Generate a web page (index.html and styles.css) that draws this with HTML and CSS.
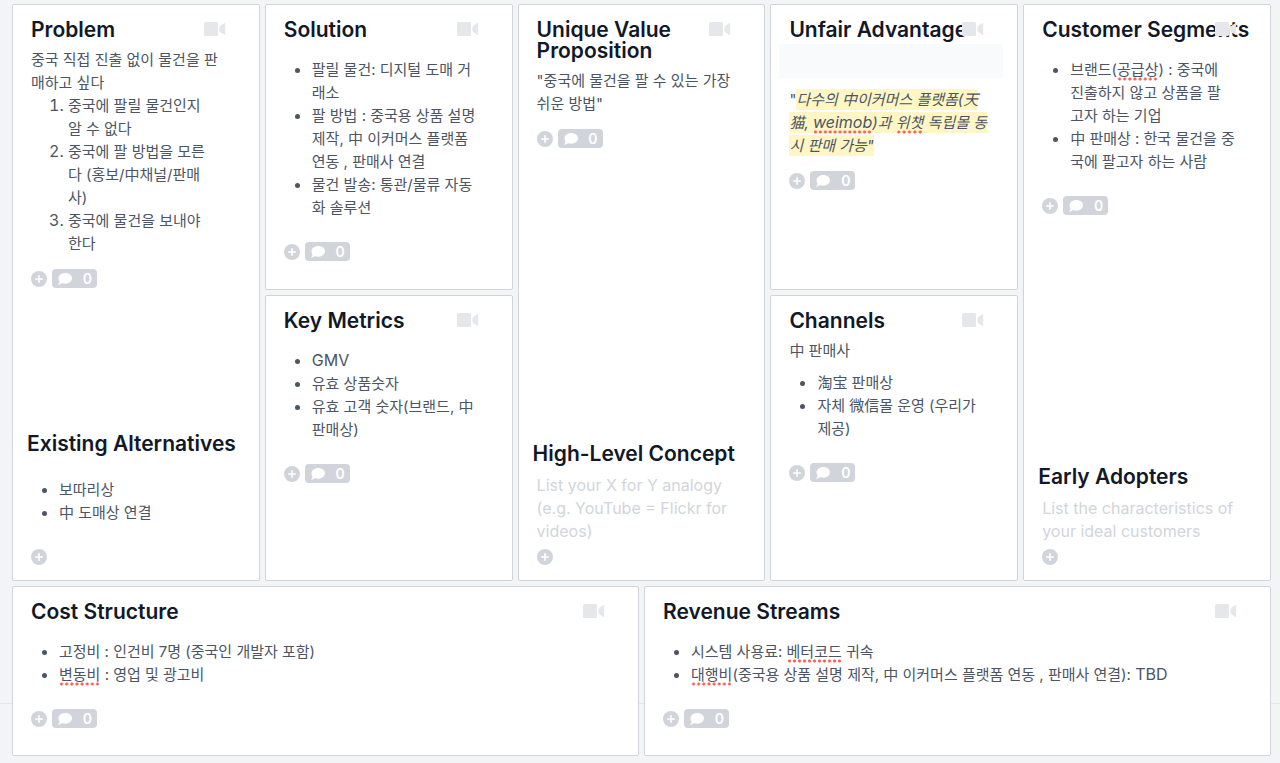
FILE: index.html
```html
<!DOCTYPE html>
<html lang="ko">
<head>
    <meta charset="UTF-8">
    <meta name="viewport" content="width=device-width, initial-scale=1.0">
    <title>Lean Canvas</title>
    <link rel="stylesheet" href="styles.css">
</head>
<body>
    <!-- shared icons -->
    <svg class="sprite" aria-hidden="true">
        <symbol id="icon-video" viewBox="0 0 22 14">
            <rect x="0" y="0" width="14" height="14" rx="1.5"/>
            <path d="M20.2 1.2 Q21.2 .6 21.2 1.8 V12.2 Q21.2 13.4 20.2 12.8 L16.4 10.3 Q15.2 9.2 15.2 7 Q15.2 4.8 16.4 3.7 Z"/>
        </symbol>
        <symbol id="icon-plus" viewBox="0 0 16 16">
            <circle cx="8" cy="8" r="8" fill="#d1d5db"/>
            <path d="M8 4.7 V11.3 M4.7 8 H11.3" stroke="#fff" stroke-width="1.6" stroke-linecap="round"/>
        </symbol>
        <symbol id="icon-comment" viewBox="0 0 14 12">
            <path d="M7.3 0 C11 0 14 2.3 14 5.3 C14 8.3 11 10.7 7.3 10.7 C6 10.7 4.9 10.5 3.9 10 C2.9 10.9 1.6 11.6 .2 11.7 C0 11.7 0 11.5 .1 11.4 C1 10.6 1.4 9.6 1.5 8.4 C.9 7.5 .5 6.4 .5 5.3 C.5 2.3 3.6 0 7.3 0 Z"/>
        </symbol>
    </svg>

    <main class="canvas">
        <section class="card tall">
            <h2>Problem</h2>
            <button class="video" aria-label="Problem video"><svg><use href="#icon-video"/></svg></button>
            <div class="editor">
                <p>중국 직접 진출 없이 물건을 판<br>매하고 싶다</p>
                <ol>
                    <li>중국에 팔릴 물건인지<br>알 수 없다</li>
                    <li>중국에 팔 방법을 모른<br>다 (홍보/中채널/판매<br>사)</li>
                    <li>중국에 물건을 보내야<br>한다</li>
                </ol>
            </div>
            <div class="actions">
                <button class="add" aria-label="Add"><svg><use href="#icon-plus"/></svg></button>
                <button class="comments" aria-label="Comments: 0"><svg><use href="#icon-comment"/></svg><span>0</span></button>
            </div>
            <div class="sub">
                <h2>Existing Alternatives</h2>
                <div class="editor">
                    <ul>
                        <li>보따리상</li>
                        <li>中 도매상 연결</li>
                    </ul>
                </div>
                <button class="add" aria-label="Add"><svg><use href="#icon-plus"/></svg></button>
            </div>
        </section>

        <section class="card">
            <h2>Solution</h2>
            <button class="video" aria-label="Solution video"><svg><use href="#icon-video"/></svg></button>
            <div class="editor">
                <ul>
                    <li>팔릴 물건: 디지털 도매 거<br>래소</li>
                    <li>팔 방법 : 중국용 상품 설명<br>제작, 中 이커머스 플랫폼<br>연동 , 판매사 연결</li>
                    <li>물건 발송: 통관/물류 자동<br>화 솔루션</li>
                </ul>
            </div>
            <div class="actions">
                <button class="add" aria-label="Add"><svg><use href="#icon-plus"/></svg></button>
                <button class="comments" aria-label="Comments: 0"><svg><use href="#icon-comment"/></svg><span>0</span></button>
            </div>
        </section>

        <section class="card tall">
            <h2>Unique Value<br>Proposition</h2>
            <button class="video" aria-label="Unique Value Proposition video"><svg><use href="#icon-video"/></svg></button>
            <div class="editor">
                <p>"중국에 물건을 팔 수 있는 가장<br>쉬운 방법"</p>
            </div>
            <div class="actions">
                <button class="add" aria-label="Add"><svg><use href="#icon-plus"/></svg></button>
                <button class="comments" aria-label="Comments: 0"><svg><use href="#icon-comment"/></svg><span>0</span></button>
            </div>
            <div class="sub">
                <h2><label for="concept">High-Level Concept</label></h2>
                <textarea id="concept" rows="3" placeholder="List your X for Y analogy (e.g. YouTube = Flickr for videos)"></textarea>
                <button class="add" aria-label="Add"><svg><use href="#icon-plus"/></svg></button>
            </div>
        </section>

        <section class="card">
            <h2>Unfair Advantage</h2>
            <button class="video" aria-label="Unfair Advantage video"><svg><use href="#icon-video"/></svg></button>
            <div class="toolbar"></div>
            <div class="editor">
                <p>"<mark>다수의 中이커머스 플랫폼(天<br>猫, <span class="latin typo">weimob</span>)과 <span class="typo">위챗</span> 독립몰 동<br>시 판매 가능"</mark></p>
            </div>
            <div class="actions">
                <button class="add" aria-label="Add"><svg><use href="#icon-plus"/></svg></button>
                <button class="comments" aria-label="Comments: 0"><svg><use href="#icon-comment"/></svg><span>0</span></button>
            </div>
        </section>

        <section class="card tall">
            <h2>Customer Segments</h2>
            <button class="video" aria-label="Customer Segments video"><svg><use href="#icon-video"/></svg></button>
            <div class="editor">
                <ul>
                    <li>브랜드(<span class="typo">공급상</span>) : 중국에<br>진출하지 않고 상품을 팔<br>고자 하는 기업</li>
                    <li>中 판매상 : 한국 물건을 중<br>국에 팔고자 하는 사람</li>
                </ul>
            </div>
            <div class="actions">
                <button class="add" aria-label="Add"><svg><use href="#icon-plus"/></svg></button>
                <button class="comments" aria-label="Comments: 0"><svg><use href="#icon-comment"/></svg><span>0</span></button>
            </div>
            <div class="sub">
                <h2><label for="adopters">Early Adopters</label></h2>
                <textarea id="adopters" rows="2" placeholder="List the characteristics of your ideal customers"></textarea>
                <button class="add" aria-label="Add"><svg><use href="#icon-plus"/></svg></button>
            </div>
        </section>

        <section class="card">
            <h2>Key Metrics</h2>
            <button class="video" aria-label="Key Metrics video"><svg><use href="#icon-video"/></svg></button>
            <div class="editor">
                <ul>
                    <li><span class="latin">GMV</span></li>
                    <li>유효 상품숫자</li>
                    <li>유효 고객 숫자(브랜드, 中<br>판매상)</li>
                </ul>
            </div>
            <div class="actions">
                <button class="add" aria-label="Add"><svg><use href="#icon-plus"/></svg></button>
                <button class="comments" aria-label="Comments: 0"><svg><use href="#icon-comment"/></svg><span>0</span></button>
            </div>
        </section>

        <section class="card">
            <h2>Channels</h2>
            <button class="video" aria-label="Channels video"><svg><use href="#icon-video"/></svg></button>
            <div class="editor">
                <p>中 판매사</p>
                <ul>
                    <li>淘宝 판매상</li>
                    <li>자체 微信몰 운영 (우리가<br>제공)</li>
                </ul>
            </div>
            <div class="actions">
                <button class="add" aria-label="Add"><svg><use href="#icon-plus"/></svg></button>
                <button class="comments" aria-label="Comments: 0"><svg><use href="#icon-comment"/></svg><span>0</span></button>
            </div>
        </section>

        <section class="card wide">
            <h2>Cost Structure</h2>
            <button class="video" aria-label="Cost Structure video"><svg><use href="#icon-video"/></svg></button>
            <div class="editor">
                <ul>
                    <li>고정비 : 인건비 7명 (중국인 개발자 포함)</li>
                    <li><span class="typo">변동비</span> : 영업 및 광고비</li>
                </ul>
            </div>
            <div class="actions">
                <button class="add" aria-label="Add"><svg><use href="#icon-plus"/></svg></button>
                <button class="comments" aria-label="Comments: 0"><svg><use href="#icon-comment"/></svg><span>0</span></button>
            </div>
        </section>

        <section class="card wide">
            <h2>Revenue Streams</h2>
            <button class="video" aria-label="Revenue Streams video"><svg><use href="#icon-video"/></svg></button>
            <div class="editor">
                <ul>
                    <li>시스템 사용료: <span class="typo">베터코드</span> 귀속</li>
                    <li><span class="typo">대행비</span>(중국용 상품 설명 제작, 中 이커머스 플랫폼 연동 , 판매사 연결): <span class="latin">TBD</span></li>
                </ul>
            </div>
            <div class="actions">
                <button class="add" aria-label="Add"><svg><use href="#icon-plus"/></svg></button>
                <button class="comments" aria-label="Comments: 0"><svg><use href="#icon-comment"/></svg><span>0</span></button>
            </div>
        </section>
    </main>
</body>
</html>
```
FILE: styles.css
```css
:root {
    --page-bg: #f3f4f6;
    --card-border: #d1d5db;
    --icon-color: #d1d5db;
    --title-color: #111827;
    --text-color: #4b5563;
}

* {
    box-sizing: border-box;
}

body {
    margin: 0;
    background-color: var(--page-bg);
    color: var(--text-color);
    font-family: Inter, "Noto Sans CJK KR", sans-serif;
    font-size: 15px;
    line-height: 23px;
}

h2, p, ul, ol {
    margin: 0;
}

button {
    padding: 0;
    border: 0;
    background: none;
    font: inherit;
    cursor: pointer;
}

.sprite {
    display: none;
}

.canvas {
    position: relative;
    display: grid;
    grid-template-columns: repeat(10, minmax(0, 1fr));
    grid-template-rows: minmax(286px, auto) minmax(286px, auto) minmax(170px, auto);
    gap: 5px;
    padding: 4px 9px 7px 12px;
}

/* page rule that runs behind the cards */
.canvas::before {
    content: "";
    position: absolute;
    left: 0;
    right: 0;
    bottom: 59px;
    border-top: 1px solid #e5e7eb;
}

.card {
    position: relative;
    display: flex;
    flex-direction: column;
    grid-column: span 2;
    padding: 14px 24px 15px 18px;
    background-color: #fff;
    border: 1px solid var(--card-border);
    border-radius: 2px;
}

.tall {
    grid-row: span 2;
}

.wide {
    grid-column: span 5;
}

h2 {
    color: var(--title-color);
    font-size: 21px;
    font-weight: 600;
    line-height: 21px;
    white-space: nowrap;
}

.video {
    position: absolute;
    top: 17px;
    right: 33px;
    width: 22px;
    height: 14px;
}

.video svg {
    display: block;
    width: 22px;
    height: 14px;
    fill: #e5e7eb;
}

.toolbar {
    height: 34px;
    margin: 4px -10px 2px;
    background-color: #f9fafb;
}

.editor {
    margin: 8px 0 14px;
}

.editor ul {
    margin: 9px 0;
    padding-left: 28px;
}

.editor ol {
    padding-left: 37px;
}

.editor > ul:first-child {
    margin-top: 18px;
}

.editor:has(> ul:first-child) {
    margin-top: 0;
}

.latin, li::marker {
    font-size: 16px;
}

mark {
    padding: 1px 0;
    background-color: #fef6c5;
    color: inherit;
    font-style: italic;
}

/* spell checker underline */
.typo {
    padding-bottom: 2px;
    background-image: radial-gradient(circle, #ff5b54 0 1px, transparent 2px);
    background-position: left bottom;
    background-size: 5px 4px;
    background-repeat: round no-repeat;
}

.actions {
    display: flex;
    align-items: center;
    gap: 5px;
}

.add, .add svg {
    display: block;
    width: 16px;
    height: 16px;
}

.comments {
    display: flex;
    align-items: center;
    justify-content: space-between;
    width: 45px;
    height: 19px;
    padding: 0 5px 0 6px;
    background-color: var(--icon-color);
    border-radius: 4px;
    color: #fff;
    font-size: 14px;
    font-weight: 600;
    line-height: 19px;
}

.comments svg {
    width: 14px;
    height: 12px;
    fill: #fff;
}

.sub {
    margin-top: auto;
}

.sub h2 {
    margin: 0 -4px 10px;
}

.sub .editor > ul {
    margin: 24px 0 25px;
}

.sub .editor {
    margin: -10px 0 0;
}

textarea {
    display: block;
    width: 100%;
    margin-bottom: 6px;
    padding: 0;
    border: 0;
    background: none;
    color: inherit;
    font: inherit;
    font-size: 16px;
    line-height: 23px;
    resize: none;
}

textarea::placeholder {
    color: #d1d5db;
}
```
